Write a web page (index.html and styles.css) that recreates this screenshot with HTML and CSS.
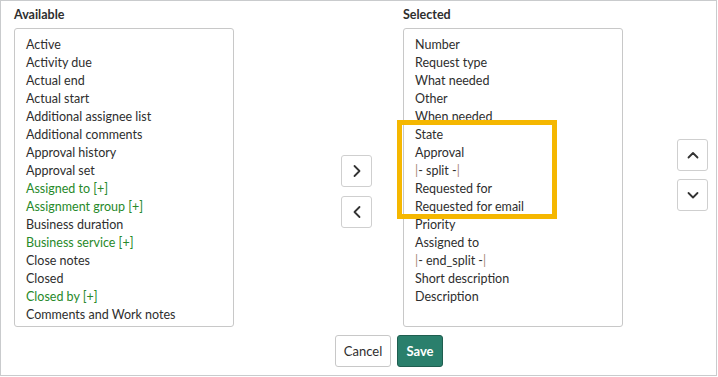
FILE: index.html
```html
<!DOCTYPE html>
<html>
<head>
<meta charset="utf-8">
<link rel="stylesheet" href="styles.css">
</head>
<body>
<div class="panel">
  <div class="columns">
    <div class="col col-left">
      <div class="label">Available</div>
      <div class="listbox">
        <div class="item">Active</div>
        <div class="item">Activity due</div>
        <div class="item">Actual end</div>
        <div class="item">Actual start</div>
        <div class="item">Additional assignee list</div>
        <div class="item">Additional comments</div>
        <div class="item">Approval history</div>
        <div class="item">Approval set</div>
        <div class="item ref">Assigned to [+]</div>
        <div class="item ref">Assignment group [+]</div>
        <div class="item">Business duration</div>
        <div class="item ref">Business service [+]</div>
        <div class="item">Close notes</div>
        <div class="item">Closed</div>
        <div class="item ref">Closed by [+]</div>
        <div class="item">Comments and Work notes</div>
        <div class="item ref">Company [+]</div>
      </div>
    </div>
    <div class="movers">
      <button class="icon-btn" aria-label="Add"><svg width="14" height="14" viewBox="0 0 14 14"><path d="M4.5 2 L9.5 7 L4.5 12" fill="none" stroke="#333" stroke-width="1.8" stroke-linecap="round" stroke-linejoin="round"/></svg></button>
      <button class="icon-btn" aria-label="Remove"><svg width="14" height="14" viewBox="0 0 14 14"><path d="M9.5 2 L4.5 7 L9.5 12" fill="none" stroke="#333" stroke-width="1.8" stroke-linecap="round" stroke-linejoin="round"/></svg></button>
    </div>
    <div class="col col-right">
      <div class="label">Selected</div>
      <div class="listbox">
        <div class="item">Number</div>
        <div class="item">Request type</div>
        <div class="item">What needed</div>
        <div class="item">Other</div>
        <div class="item">When needed</div>
        <div class="item">State</div>
        <div class="item">Approval</div>
        <div class="item"><span class="pipe">|</span>- split -<span class="pipe">|</span></div>
        <div class="item">Requested for</div>
        <div class="item">Requested for email</div>
        <div class="item">Priority</div>
        <div class="item">Assigned to</div>
        <div class="item"><span class="pipe">|</span>- end_split -<span class="pipe">|</span></div>
        <div class="item">Short description</div>
        <div class="item">Description</div>
      </div>
      <div class="highlight"></div>
    </div>
    <div class="orderers">
      <button class="icon-btn" aria-label="Move up"><svg width="14" height="14" viewBox="0 0 14 14"><path d="M2.5 9.5 L7 5 L11.5 9.5" fill="none" stroke="#333" stroke-width="1.8" stroke-linecap="round" stroke-linejoin="round"/></svg></button>
      <button class="icon-btn" aria-label="Move down"><svg width="14" height="14" viewBox="0 0 14 14"><path d="M2.5 5 L7 9.5 L11.5 5" fill="none" stroke="#333" stroke-width="1.8" stroke-linecap="round" stroke-linejoin="round"/></svg></button>
    </div>
  </div>
  <div class="actions">
    <button class="btn btn-default">Cancel</button>
    <button class="btn btn-primary">Save</button>
  </div>
</div>
</body>
</html>
```
FILE: styles.css
```css
html, body {
  margin: 0;
  padding: 0;
  background: #fff;
}
body {
  font-family: Lato, "Liberation Sans", sans-serif;
  font-size: 12.5px;
  color: #2e2e2e;
}
.panel {
  width: 717px;
  height: 376px;
  box-sizing: border-box;
  border: 1px solid #c9cbcd;
  padding: 0 0 0 13px;
}
.columns {
  display: flex;
  align-items: flex-start;
}
.col {
  width: 220px;
  position: relative;
}
.label {
  font-weight: 700;
  font-size: 12.5px;
  height: 27px;
  line-height: 27px;
  color: #2e2e2e;
}
.listbox {
  box-sizing: border-box;
  height: 299px;
  border: 1px solid #c8c8c8;
  border-radius: 3px;
  padding: 7px 0 0 11px;
  overflow: hidden;
}
.item {
  height: 18px;
  line-height: 18px;
  white-space: nowrap;
}
.item.ref {
  color: #27892a;
}
.pipe {
  color: #a9877a;
}
.movers {
  display: flex;
  flex-direction: column;
  gap: 9px;
  margin: 154px 31px 0 107px;
}
.orderers {
  display: flex;
  flex-direction: column;
  gap: 8px;
  margin: 138px 0 0 54px;
}
.icon-btn {
  width: 31px;
  height: 32px;
  box-sizing: border-box;
  border: 1px solid #cfcfcf;
  border-radius: 3px;
  background: #fff;
  padding: 0;
  display: flex;
  align-items: center;
  justify-content: center;
}
.highlight {
  position: absolute;
  left: -6px;
  top: 119px;
  width: 160px;
  height: 99px;
  box-sizing: border-box;
  border: 5px solid #f5b700;
}
.actions {
  display: flex;
  gap: 6px;
  margin: 8px 0 0 321px;
}
.btn {
  height: 32px;
  box-sizing: border-box;
  border-radius: 3px;
  font-family: Lato, "Liberation Sans", sans-serif;
  font-size: 13px;
  padding: 0;
}
.btn-default {
  width: 56px;
  background: #fff;
  border: 1px solid #c8c8c8;
  color: #2e2e2e;
}
.btn-primary {
  width: 46px;
  background: #2a7f6c;
  border: 1px solid #1f5e50;
  color: #fff;
  font-weight: 700;
}
```
